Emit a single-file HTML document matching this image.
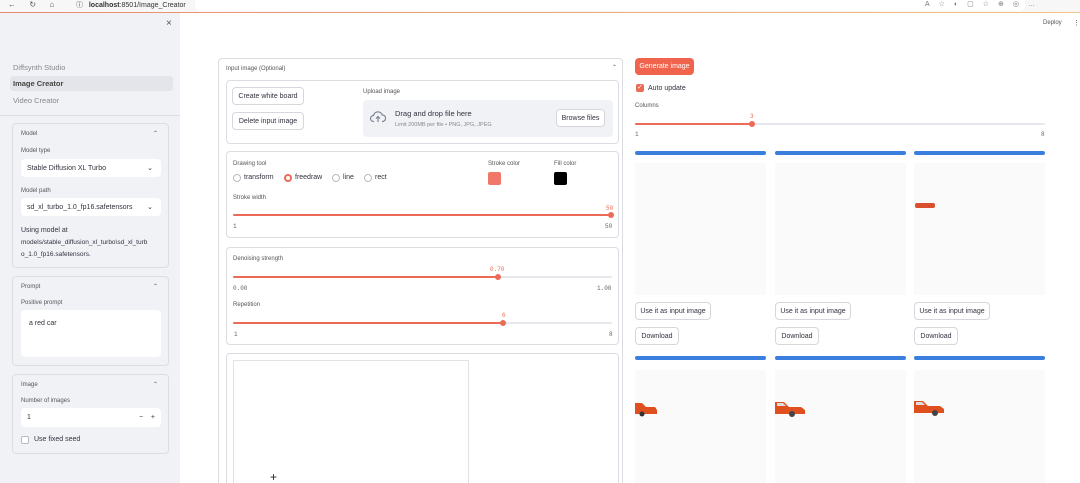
<!DOCTYPE html>
<html style="width:1080px;height:483px;overflow:hidden"><head><meta charset="utf-8"><style>
*{box-sizing:border-box;margin:0;padding:0}
body{width:1080px;height:483px;overflow:hidden;background:#fff;font-family:"Liberation Sans",sans-serif;color:#31333f;position:relative}
.a{position:absolute}
.t{position:absolute;font-size:7.5px;color:#31333f;white-space:nowrap}
.s{font-size:6px;color:#555}
.box{position:absolute;border:1px solid #dcdde2;border-radius:4px}
.btn{position:absolute;border:1px solid #d6d7dc;border-radius:4px;background:#fff;font-size:7px;color:#31333f;display:flex;align-items:center;justify-content:center;white-space:nowrap}
.sel{position:absolute;background:#fff;border-radius:4px;font-size:7.5px;display:flex;align-items:center;padding-left:6px}
.track{position:absolute;height:2px;background:#e6e8ee;border-radius:1px}
.fill{position:absolute;height:2px;background:#ec6b57;border-radius:1px}
.thumb{position:absolute;width:6px;height:6px;border-radius:50%;background:#ec6b57}
.mono{font-family:"Liberation Mono",monospace;font-size:6px;color:#666}
.blue{position:absolute;height:4px;background:#3b7fde;border-radius:2px}
.img{position:absolute;background:#fafafa}
.radio{position:absolute;width:8px;height:8px;border:1px solid #bbb;border-radius:50%;background:#fff}
</style></head><body>
<!-- browser bar -->
<div class="a" style="left:0;top:0;width:1080px;height:12px;background:#f7f7f7"></div>
<div class="a" style="left:195px;top:0;width:830px;height:11px;background:#fff;border-radius:0 0 6px 6px"></div>
<div class="t" style="left:8px;top:0;font-size:8px;color:#555">←&nbsp;&nbsp;&nbsp;&nbsp;&nbsp;&nbsp;↻&nbsp;&nbsp;&nbsp;&nbsp;&nbsp;&nbsp;⌂</div>
<div class="t" style="left:76px;top:0;font-size:7px;color:#333">ⓘ&nbsp;&nbsp;&nbsp;<b>localhost</b>:8501/Image_Creator</div>
<div class="t" style="left:925px;top:0;font-size:7px;color:#777;letter-spacing:9px">A☆◐▢☆⊕◎…</div>
<div class="a" style="left:0;top:12px;width:1080px;height:1px;background:linear-gradient(90deg,#e88a6e,#f4c48a)"></div>
<!-- sidebar -->
<div class="a" style="left:0;top:13px;width:180px;height:470px;background:#f0f2f6"></div>
<div class="t" style="left:166px;top:18px;font-size:10px;color:#555">×</div>
<div class="t" style="left:13px;top:63px;color:#888">Diffsynth Studio</div>
<div class="a" style="left:10px;top:76px;width:163px;height:15px;background:#e3e5ea;border-radius:3px"></div>
<div class="t" style="left:13px;top:79px;font-weight:bold;color:#444">Image Creator</div>
<div class="t" style="left:13px;top:96px;color:#888">Video Creator</div>
<div class="a" style="left:0;top:115px;width:180px;height:1px;background:#dcdde2"></div>

<div class="box" style="left:12px;top:123px;width:157px;height:145px"></div>
<div class="t s" style="left:21px;top:131px">Model</div><div class="t s" style="left:153px;top:130px">⌃</div>
<div class="t s" style="left:21px;top:148px">Model type</div>
<div class="sel" style="left:21px;top:159px;width:140px;height:18px;font-size:7px">Stable Diffusion XL Turbo<span class="a" style="right:8px;font-size:7px">⌄</span></div>
<div class="t s" style="left:21px;top:188px">Model path</div>
<div class="sel" style="left:21px;top:198px;width:140px;height:18px;font-size:7px">sd_xl_turbo_1.0_fp16.safetensors<span class="a" style="right:8px">⌄</span></div>
<div class="t" style="left:21px;top:227px;font-size:7px">Using model at</div>
<div class="t" style="left:21px;top:239px;font-size:6.5px">models/stable_diffusion_xl_turbo\sd_xl_turb</div>
<div class="t" style="left:21px;top:251px;font-size:6.5px">o_1.0_fp16.safetensors.</div>

<div class="box" style="left:12px;top:276px;width:157px;height:90px"></div>
<div class="t s" style="left:21px;top:284px">Prompt</div><div class="t s" style="left:153px;top:283px">⌃</div>
<div class="t s" style="left:21px;top:300px">Positive prompt</div>
<div class="a" style="left:21px;top:310px;width:140px;height:47px;background:#fff;border-radius:4px"></div>
<div class="t" style="left:29px;top:320px;font-size:7px">a red car</div>

<div class="box" style="left:12px;top:374px;width:157px;height:80px"></div>
<div class="t s" style="left:21px;top:382px">Image</div><div class="t s" style="left:153px;top:381px">⌃</div>
<div class="t s" style="left:21px;top:398px">Number of images</div>
<div class="sel" style="left:21px;top:408px;width:140px;height:19px;font-size:7px">1<span class="a" style="right:6px;font-size:7px">−&nbsp;&nbsp;&nbsp;&nbsp;+</span></div>
<div class="a" style="left:21px;top:436px;width:8px;height:8px;border:1px solid #bbb;border-radius:2px;background:#fff"></div>
<div class="t" style="left:34px;top:436px;font-size:7px">Use fixed seed</div>

<!-- top right -->
<div class="t" style="left:1043px;top:20px;font-size:6px;color:#555">Deploy</div>
<div class="t" style="left:1073px;top:19px;font-size:7px;color:#555">⋮</div>

<!-- main column -->
<div class="box" style="left:218px;top:58px;width:405px;height:430px"></div>
<div class="t s" style="left:226px;top:66px">Input image (Optional)</div>
<div class="t s" style="left:612px;top:64px">⌃</div>

<div class="box" style="left:226px;top:80px;width:393px;height:64px"></div>
<div class="btn" style="left:232px;top:87px;width:72px;height:18px">Create white board</div>
<div class="btn" style="left:232px;top:112px;width:72px;height:18px">Delete input image</div>
<div class="t s" style="left:363px;top:89px">Upload image</div>
<div class="a" style="left:363px;top:100px;width:250px;height:37px;background:#f0f2f6;border-radius:4px"></div>
<svg class="a" style="left:370px;top:111px" width="16" height="12" viewBox="0 0 16 12"><path d="M4 10.5H3.5a3 3 0 0 1 0-6 4.5 4.5 0 0 1 8.7-.5A3 3 0 0 1 12.5 10.5H12M8 11V5.5M6 7.5l2-2 2 2" fill="none" stroke="#808495" stroke-width="1.2"/></svg>
<div class="t" style="left:395px;top:109px;font-size:7.5px">Drag and drop file here</div>
<div class="t" style="left:395px;top:122px;font-size:5.5px;color:#888">Limit 200MB per file • PNG, JPG, JPEG</div>
<div class="btn" style="left:556px;top:109px;width:49px;height:18px">Browse files</div>

<div class="box" style="left:226px;top:151px;width:393px;height:87px"></div>
<div class="t s" style="left:233px;top:161px">Drawing tool</div>
<div class="radio" style="left:233px;top:174px"></div><div class="t" style="left:244px;top:174px;font-size:7px">transform</div>
<div class="radio" style="left:284px;top:174px;border:2.5px solid #ec6b57"></div><div class="t" style="left:295px;top:174px;font-size:7px">freedraw</div>
<div class="radio" style="left:332px;top:174px"></div><div class="t" style="left:343px;top:174px;font-size:7px">line</div>
<div class="radio" style="left:364px;top:174px"></div><div class="t" style="left:375px;top:174px;font-size:7px">rect</div>
<div class="t s" style="left:488px;top:161px">Stroke color</div>
<div class="a" style="left:488px;top:172px;width:13px;height:13px;background:#f07868;border-radius:2px"></div>
<div class="t s" style="left:554px;top:161px">Fill color</div>
<div class="a" style="left:554px;top:172px;width:13px;height:13px;background:#000;border-radius:2px"></div>
<div class="t s" style="left:233px;top:195px">Stroke width</div>
<div class="fill" style="left:233px;top:214px;width:378px"></div>
<div class="thumb" style="left:608px;top:212px"></div>
<div class="t mono" style="left:606px;top:205px;color:#ec6b57">50</div>
<div class="t mono" style="left:233px;top:223px">1</div><div class="t mono" style="left:605px;top:223px">50</div>

<div class="box" style="left:226px;top:247px;width:393px;height:98px"></div>
<div class="t s" style="left:233px;top:256px">Denoising strength</div>
<div class="track" style="left:233px;top:276px;width:379px"></div>
<div class="fill" style="left:233px;top:276px;width:265px"></div>
<div class="thumb" style="left:495px;top:274px"></div>
<div class="t mono" style="left:490px;top:266px;color:#ec6b57">0.70</div>
<div class="t mono" style="left:233px;top:285px">0.00</div><div class="t mono" style="left:597px;top:285px">1.00</div>
<div class="t s" style="left:233px;top:302px">Repetition</div>
<div class="track" style="left:233px;top:322px;width:379px"></div>
<div class="fill" style="left:233px;top:322px;width:270px"></div>
<div class="thumb" style="left:500px;top:320px"></div>
<div class="t mono" style="left:502px;top:312px;color:#ec6b57">6</div>
<div class="t mono" style="left:234px;top:331px">1</div><div class="t mono" style="left:609px;top:331px">8</div>

<div class="box" style="left:226px;top:353px;width:393px;height:135px"></div>
<div class="a" style="left:233px;top:360px;width:236px;height:130px;border:1px solid #e2e2e2"></div>
<div class="t" style="left:270px;top:470px;font-size:12px;color:#222">+</div>

<!-- right column -->
<div class="a" style="left:635px;top:58px;width:59px;height:17px;background:#f0634c;border-radius:4px;color:#fff;font-size:7px;display:flex;align-items:center;justify-content:center">Generate image</div>
<div class="a" style="left:636px;top:84px;width:8px;height:8px;background:#ec6b57;border-radius:2px;color:#fff;font-size:7px;line-height:8px;text-align:center">✓</div>
<div class="t" style="left:648px;top:85px;font-size:7px">Auto update</div>
<div class="t s" style="left:635px;top:103px">Columns</div>
<div class="track" style="left:635px;top:123px;width:410px"></div>
<div class="fill" style="left:635px;top:123px;width:117px"></div>
<div class="thumb" style="left:749px;top:121px"></div>
<div class="t mono" style="left:750px;top:113px;color:#ec6b57">3</div>
<div class="t mono" style="left:635px;top:131px">1</div><div class="t mono" style="left:1041px;top:131px">8</div>

<div class="blue" style="left:635px;top:151px;width:131px"></div>
<div class="blue" style="left:775px;top:151px;width:131px"></div>
<div class="blue" style="left:914px;top:151px;width:131px"></div>
<div class="img" style="left:635px;top:163px;width:131px;height:132px"></div>
<div class="img" style="left:775px;top:163px;width:131px;height:132px"></div>
<div class="img" style="left:914px;top:163px;width:131px;height:132px"></div>
<div class="a" style="left:915px;top:203px;width:20px;height:5px;background:#d9502e;border-radius:2px"></div>

<div class="btn" style="left:635px;top:302px;width:76px;height:18px">Use it as input image</div>
<div class="btn" style="left:775px;top:302px;width:76px;height:18px">Use it as input image</div>
<div class="btn" style="left:914px;top:302px;width:76px;height:18px">Use it as input image</div>
<div class="btn" style="left:635px;top:327px;width:44px;height:18px">Download</div>
<div class="btn" style="left:775px;top:327px;width:44px;height:18px">Download</div>
<div class="btn" style="left:914px;top:327px;width:44px;height:18px">Download</div>

<div class="blue" style="left:635px;top:356px;width:131px"></div>
<div class="blue" style="left:775px;top:356px;width:131px"></div>
<div class="blue" style="left:914px;top:356px;width:131px"></div>
<div class="img" style="left:635px;top:370px;width:131px;height:113px"></div>
<div class="img" style="left:775px;top:370px;width:131px;height:113px"></div>
<div class="img" style="left:914px;top:370px;width:131px;height:113px"></div>
<svg class="a" style="left:635px;top:400px" width="24" height="17" viewBox="0 0 24 17"><path d="M0 3h7l4 4h9l2 3v4H0z" fill="#e0501f"/><circle cx="7" cy="14" r="2.5" fill="#333"/></svg>
<svg class="a" style="left:775px;top:400px" width="32" height="18" viewBox="0 0 32 18"><path d="M0 2h9l5 5h12l4 3v4H0z" fill="#e0501f"/><path d="M2 3h6l3 3H2z" fill="#ddd"/><circle cx="17" cy="14" r="3" fill="#444"/></svg>
<svg class="a" style="left:914px;top:399px" width="32" height="18" viewBox="0 0 32 18"><path d="M0 2h9l5 5h12l4 3v4H0z" fill="#e0501f"/><path d="M2 3h6l3 3H2z" fill="#ddd"/><circle cx="21" cy="14" r="3" fill="#444"/></svg>
</body></html>
